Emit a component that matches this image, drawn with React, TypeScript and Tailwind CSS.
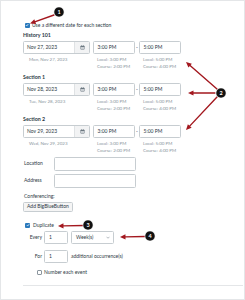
import React from "react";

const LABEL = "text-[#2d3b45]";
const HINT = "text-[#8b969e]";

function CheckBox({ checked }: { checked: boolean }) {
  if (checked) {
    return (
      <div className="w-[5px] h-[5px] rounded-[1px] bg-[#2b7abc] flex items-center justify-center shrink-0">
        <svg width="4" height="4" viewBox="0 0 10 10">
          <path d="M2 5.2 L4.2 7.4 L8.2 2.8" stroke="white" strokeWidth="1.8" fill="none" />
        </svg>
      </div>
    );
  }
  return <div className="w-[5px] h-[5px] rounded-[1px] border border-[#8b969e] bg-white shrink-0" />;
}

function CalendarIcon() {
  return (
    <svg width="5" height="5" viewBox="0 0 10 10">
      <rect x="1" y="1.5" width="8" height="7.5" rx="0.8" fill="#6b7780" />
      <rect x="2" y="4" width="6" height="4" fill="#c9ced2" />
      <rect x="2.5" y="0.3" width="1" height="2" fill="#6b7780" />
      <rect x="6.5" y="0.3" width="1" height="2" fill="#6b7780" />
    </svg>
  );
}

function Box({ w, children, pl = "pl-[4px]" }: { w: string; children?: React.ReactNode; pl?: string }) {
  return (
    <div className={`${w} h-[13px] border border-[#c7cdd1] rounded-[1.5px] bg-white flex items-center ${pl} text-[5px] ${LABEL} shrink-0`}>
      {children}
    </div>
  );
}

function Section({ title, date, hint }: { title: string; date: string; hint: string }) {
  return (
    <div className="flex flex-col mt-[4px]">
      <div className={`h-[6px] leading-[6px] text-[5.3px] font-bold ${LABEL}`}>{title}</div>
      <div className="mt-[3px] flex items-center h-[13px]">
        <div className="w-[67px] h-[13px] flex border border-[#c7cdd1] rounded-[1.5px] overflow-hidden shrink-0">
          <div className={`w-[50px] h-full bg-white flex items-center pl-[3px] text-[5px] ${LABEL}`}>{date}</div>
          <div className="flex-1 h-full bg-[#f2f3f4] border-l border-[#dfe2e4] flex items-center justify-center">
            <CalendarIcon />
          </div>
        </div>
        <div className="w-[3px]" />
        <Box w="w-[42px]" pl="pl-[3.5px]">3:00 PM</Box>
        <div className={`w-[4px] text-center text-[5px] ${LABEL}`}>-</div>
        <Box w="w-[42px]" pl="pl-[3.5px]">5:00 PM</Box>
      </div>
      <div className={`mt-[2px] flex text-[4.5px] leading-[7px] ${HINT}`}>
        <div className="w-[67px] pl-[6px] shrink-0">{hint}</div>
        <div className="w-[3px]" />
        <div className="w-[42px] pl-[4px] shrink-0">
          <div>Local: 3:00 PM</div>
          <div>Course: 2:00 PM</div>
        </div>
        <div className="w-[4px]" />
        <div className="w-[42px] pl-[4px] shrink-0">
          <div>Local: 5:00 PM</div>
          <div>Course: 4:00 PM</div>
        </div>
      </div>
    </div>
  );
}

function Arrow({ x1, y1, x2, y2 }: { x1: number; y1: number; x2: number; y2: number }) {
  const dx = x2 - x1;
  const dy = y2 - y1;
  const len = Math.sqrt(dx * dx + dy * dy);
  const ux = dx / len;
  const uy = dy / len;
  const hl = 5.5;
  const hw = 2.6;
  const bx = x2 - ux * hl;
  const by = y2 - uy * hl;
  const px = -uy;
  const py = ux;
  const pts = `${x2},${y2} ${bx + px * hw},${by + py * hw} ${bx - px * hw},${by - py * hw}`;
  return (
    <g>
      <line x1={x1} y1={y1} x2={bx + ux * 0.5} y2={by + uy * 0.5} stroke="#a3181f" strokeWidth="1.4" strokeLinecap="round" />
      <polygon points={pts} fill="#a3181f" />
    </g>
  );
}

function Badge({ cx, cy, n }: { cx: number; cy: number; n: string }) {
  return (
    <g>
      <circle cx={cx} cy={cy} r="5.1" fill="#111" stroke="#fff" strokeWidth="0.6" />
      <text x={cx} y={cy + 2} textAnchor="middle" fontSize="5.5" fontWeight="bold" fill="#fff" fontFamily="Lato, sans-serif">
        {n}
      </text>
    </g>
  );
}

export default function App() {
  return (
    <div className="relative w-[245px] h-[300px] bg-white border border-[#e4e6e8] overflow-hidden font-[family-name:Lato,sans-serif]">
      <div className="flex flex-col pl-[22px] pr-[1px] pt-[21px]">
        <div className="flex items-center h-[6px] pl-[1.5px]">
          <CheckBox checked />
          <span className={`ml-[2.5px] text-[5px] leading-[6px] ${LABEL}`}>Use a different date for each section</span>
        </div>

        <Section title="History 101" date="Nov 27, 2023" hint="Mon, Nov 27, 2023" />
        <Section title="Section 1" date="Nov 28, 2023" hint="Tue, Nov 28, 2023" />
        <Section title="Section 2" date="Nov 29, 2023" hint="Wed, Nov 29, 2023" />

        <div className="mt-[3px] flex items-center h-[14px]">
          <div className={`w-[31px] pl-[1px] text-[5px] ${LABEL}`}>Location</div>
          <div className="w-[82px] h-[14px] border border-[#c7cdd1] rounded-[1.5px] bg-white" />
        </div>
        <div className="mt-[3px] flex items-center h-[14px]">
          <div className={`w-[31px] pl-[1px] text-[5px] ${LABEL}`}>Address</div>
          <div className="w-[82px] h-[14px] border border-[#c7cdd1] rounded-[1.5px] bg-white" />
        </div>

        <div className={`mt-[5px] h-[6px] leading-[6px] pl-[1px] text-[5px] ${LABEL}`}>Conferencing:</div>
        <div className="mt-[3px] flex">
          <div className={`h-[10px] px-[3px] flex items-center border border-[#c7cdd1] rounded-[1.5px] bg-[#f5f5f5] text-[5px] ${LABEL}`}>
            Add BigBlueButton
          </div>
        </div>

        <div className="mt-[10px] flex items-center h-[6px] pl-[2px]">
          <CheckBox checked />
          <span className={`ml-[3px] text-[5px] leading-[6px] ${LABEL}`}>Duplicate</span>
        </div>

        <div className="mt-[3px] flex items-center h-[13px]">
          <div className={`w-[19px] text-right text-[5px] ${LABEL}`}>Every</div>
          <div className="w-[2px]" />
          <Box w="w-[24px]">1</Box>
          <div className="w-[3px]" />
          <div className={`w-[43px] h-[13px] border border-[#c7cdd1] rounded-[1.5px] bg-white flex items-center justify-between pl-[4px] pr-[3px] text-[5px] ${LABEL}`}>
            <span>Week(s)</span>
            <svg width="4" height="3" viewBox="0 0 8 5">
              <path d="M1 1 L4 4 L7 1" stroke="#6b7780" strokeWidth="1" fill="none" />
            </svg>
          </div>
        </div>

        <div className="mt-[6px] flex items-center h-[13px]">
          <div className={`w-[19px] text-right text-[5px] ${LABEL}`}>For</div>
          <div className="w-[2px]" />
          <Box w="w-[24px]">1</Box>
          <div className="w-[3px]" />
          <span className={`text-[5px] ${LABEL}`}>additional occurrence(s)</span>
        </div>

        <div className="mt-[6px] flex items-center h-[6px] pl-[14px]">
          <CheckBox checked={false} />
          <span className={`ml-[2px] text-[5px] leading-[6px] ${LABEL}`}>Number each event</span>
        </div>

        <div className="mt-[10px] border-t border-[#e4e6e8]" />
      </div>

      <svg className="absolute inset-0 pointer-events-none" width="245" height="300" viewBox="0 0 245 300">
        <Arrow x1={53} y1={14} x2={29} y2={22.5} />
        <Badge cx={58} cy={11} n="1" />
        <Arrow x1={216} y1={88} x2={185} y2={61} />
        <Arrow x1={214} y1={92} x2={187} y2={92} />
        <Arrow x1={216} y1={96} x2={185} y2={129} />
        <Badge cx={220} cy={92} n="2" />
        <Arrow x1={83} y1={224.5} x2={57} y2={225} />
        <Badge cx={87} cy={224} n="3" />
        <Arrow x1={144} y1={235.5} x2={119} y2={236} />
        <Badge cx={149} cy={235} n="4" />
      </svg>
    </div>
  );
}
